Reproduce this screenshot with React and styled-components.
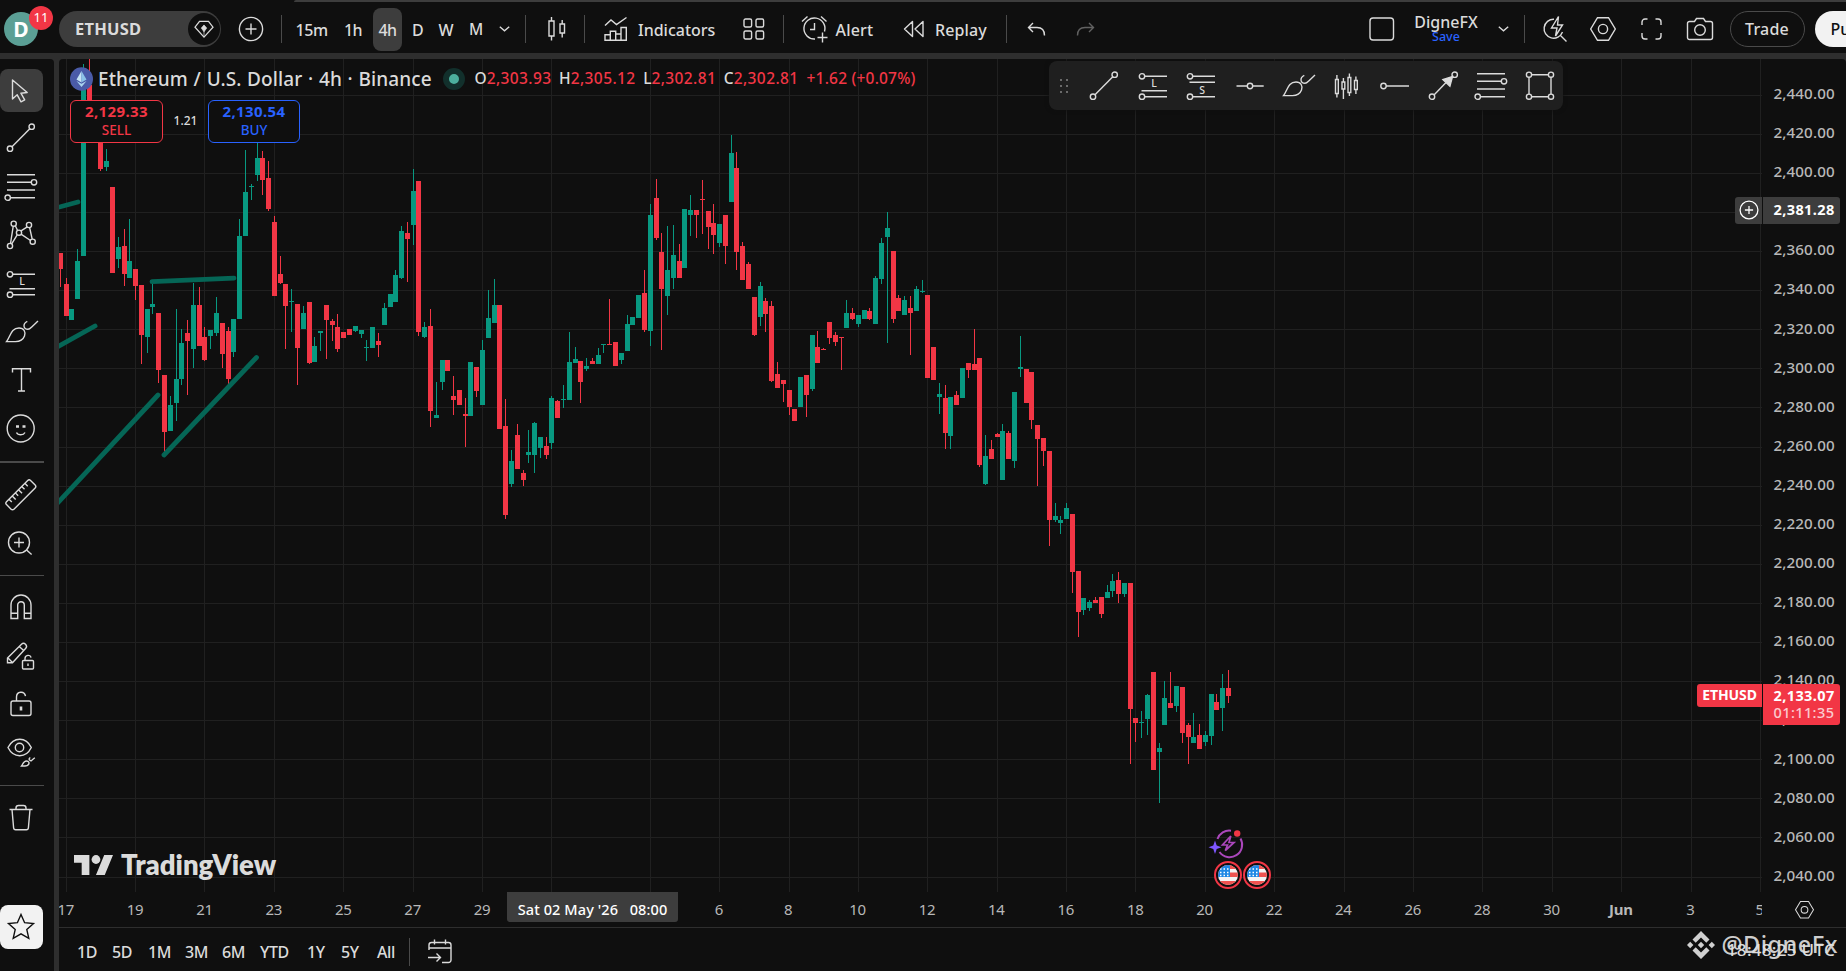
import React from 'react';
import styled, { createGlobalStyle, css } from 'styled-components';

const UP = '#089981';
const DOWN = '#f23645';
const BLUE = '#2962ff';
const TEXT = '#dbdbdb';
const BG = '#0f0f0f';
const GAP = '#2e2e2e';
const HOVER = '#3d3d3d';

const GlobalStyle = createGlobalStyle`
    body {
        margin: 0;
        background: ${GAP};
        color: ${TEXT};
        font-family: 'Noto Sans', 'Open Sans', sans-serif;
        font-size: 16px;
        overflow: hidden;
    }

    * {
        box-sizing: border-box;
    }
`;

// x, high, body top, body bottom, low, 1 = bullish
const candles = [
    [60, 253, 253, 269, 287, 0], [66, 278, 284, 316, 316, 0], [71, 309, 309, 320, 320, 1], [77, 249, 261, 299, 299, 1],
    [83, 64, 75, 256, 256, 1], [89, 59, 85, 110, 110, 0], [95, 100, 105, 120, 125, 1], [100, 125, 125, 169, 171, 0],
    [106, 149, 161, 167, 171, 1], [112, 187, 187, 273, 273, 0], [118, 237, 247, 259, 268, 1], [124, 229, 246, 274, 286, 0],
    [129, 219, 261, 278, 278, 1], [135, 269, 269, 286, 300, 0], [141, 285, 285, 335, 364, 0], [147, 309, 309, 337, 353, 1],
    [152, 282, 304, 307, 314, 1], [158, 313, 313, 370, 383, 0], [164, 375, 375, 432, 452, 0], [170, 396, 405, 431, 431, 1],
    [176, 309, 379, 403, 421, 1], [181, 329, 343, 379, 385, 1], [187, 320, 333, 341, 395, 0], [193, 283, 305, 349, 368, 1],
    [199, 287, 305, 346, 346, 0], [204, 327, 337, 360, 361, 0], [210, 330, 330, 336, 349, 1], [216, 297, 313, 333, 336, 1],
    [222, 323, 323, 354, 368, 0], [228, 327, 331, 379, 386, 0], [233, 319, 319, 352, 357, 1], [239, 219, 236, 319, 319, 1],
    [245, 150, 192, 236, 236, 1], [251, 184, 186, 187, 200, 1], [257, 130, 158, 175, 181, 1], [262, 151, 158, 180, 195, 0],
    [268, 161, 178, 209, 211, 0], [274, 216, 222, 296, 296, 0], [280, 256, 274, 283, 284, 0], [285, 284, 284, 306, 349, 0],
    [291, 289, 301, 302, 332, 1], [297, 304, 304, 348, 385, 0], [303, 306, 313, 329, 329, 1], [309, 302, 302, 363, 364, 0],
    [314, 337, 346, 362, 362, 1], [320, 331, 331, 333, 351, 1], [326, 305, 305, 320, 359, 0], [332, 319, 321, 325, 341, 0],
    [337, 314, 327, 349, 352, 0], [343, 332, 332, 338, 338, 0], [349, 329, 329, 335, 335, 0], [355, 326, 326, 331, 332, 1],
    [361, 330, 330, 334, 338, 1], [366, 340, 347, 348, 361, 1], [372, 327, 327, 348, 348, 1], [378, 333, 341, 345, 357, 0],
    [384, 303, 308, 325, 325, 1], [390, 294, 294, 307, 307, 1], [395, 270, 275, 302, 302, 1], [401, 226, 231, 278, 279, 1],
    [407, 222, 233, 239, 282, 0], [413, 169, 191, 225, 245, 1], [418, 181, 181, 332, 336, 0], [424, 322, 327, 337, 338, 1],
    [430, 309, 326, 411, 427, 0], [436, 382, 415, 418, 418, 1], [442, 360, 360, 382, 390, 1], [447, 360, 360, 371, 371, 0],
    [453, 376, 396, 400, 415, 0], [459, 390, 390, 405, 405, 0], [465, 398, 414, 416, 447, 0], [470, 362, 362, 416, 416, 1],
    [476, 367, 367, 391, 397, 0], [482, 340, 350, 405, 405, 1], [488, 290, 318, 338, 338, 1], [494, 279, 305, 323, 323, 1],
    [499, 305, 305, 429, 429, 0], [505, 399, 426, 515, 519, 0], [511, 450, 461, 484, 487, 1], [517, 424, 435, 469, 469, 0],
    [523, 470, 473, 480, 486, 0], [528, 430, 452, 455, 463, 1], [534, 422, 423, 455, 473, 1], [540, 437, 437, 448, 458, 1],
    [546, 437, 446, 455, 459, 0], [551, 396, 398, 443, 449, 1], [557, 400, 401, 418, 418, 0], [563, 385, 399, 400, 408, 1],
    [569, 332, 362, 400, 400, 1], [575, 347, 359, 363, 363, 1], [580, 361, 361, 382, 403, 0], [586, 358, 366, 369, 371, 1],
    [592, 358, 361, 364, 364, 0], [598, 348, 355, 364, 364, 1], [603, 344, 344, 345, 353, 1], [609, 299, 344, 345, 345, 0],
    [615, 342, 342, 366, 366, 0], [621, 353, 353, 360, 364, 1], [627, 315, 324, 351, 351, 1], [632, 317, 317, 325, 325, 1],
    [638, 295, 295, 318, 318, 1], [644, 270, 293, 330, 332, 0], [650, 204, 215, 331, 346, 1], [656, 179, 198, 238, 240, 0],
    [661, 233, 252, 289, 350, 0], [667, 226, 270, 296, 315, 1], [673, 225, 255, 278, 289, 1], [679, 244, 261, 278, 278, 0],
    [684, 209, 209, 268, 268, 1], [690, 195, 210, 215, 236, 1], [696, 210, 210, 215, 238, 0], [702, 180, 199, 200, 234, 0],
    [708, 211, 211, 227, 249, 0], [713, 204, 223, 235, 254, 0], [719, 224, 224, 243, 247, 1], [725, 215, 215, 246, 264, 0],
    [731, 135, 153, 202, 202, 1], [736, 152, 168, 252, 270, 0], [742, 242, 246, 280, 280, 0], [748, 262, 264, 289, 289, 0],
    [754, 297, 297, 335, 336, 0], [760, 282, 286, 317, 326, 1], [765, 298, 301, 314, 332, 0], [771, 301, 306, 381, 382, 0],
    [777, 362, 374, 388, 388, 0], [783, 380, 380, 384, 402, 0], [789, 390, 390, 407, 415, 0], [794, 409, 409, 421, 421, 0],
    [800, 377, 377, 407, 407, 1], [806, 375, 375, 395, 417, 0], [812, 335, 335, 389, 391, 1], [817, 331, 347, 363, 363, 0],
    [823, 348, 349, 350, 350, 0], [829, 322, 322, 338, 344, 0], [835, 332, 335, 342, 346, 0], [841, 337, 337, 338, 370, 0],
    [846, 300, 313, 328, 328, 1], [852, 308, 313, 319, 320, 0], [858, 315, 315, 324, 327, 1], [864, 310, 310, 319, 319, 1],
    [869, 308, 311, 319, 320, 0], [875, 276, 278, 324, 324, 1], [881, 238, 243, 279, 284, 1], [887, 212, 228, 237, 343, 1],
    [893, 251, 251, 319, 323, 0], [898, 295, 298, 311, 311, 0], [904, 296, 300, 315, 315, 1], [910, 296, 308, 313, 355, 0],
    [916, 286, 289, 311, 311, 1], [922, 280, 291, 292, 293, 1], [927, 295, 295, 378, 378, 0], [933, 347, 347, 380, 380, 0],
    [939, 383, 394, 397, 414, 1], [945, 385, 398, 433, 449, 0], [950, 397, 397, 436, 449, 1], [956, 391, 395, 405, 405, 0],
    [962, 368, 368, 398, 398, 1], [968, 363, 363, 370, 378, 0], [974, 329, 364, 370, 370, 0], [979, 358, 358, 465, 467, 0],
    [985, 435, 456, 484, 485, 1], [991, 440, 449, 459, 459, 0], [997, 433, 434, 437, 437, 0], [1002, 424, 431, 480, 480, 1],
    [1008, 431, 433, 459, 459, 0], [1014, 392, 392, 461, 468, 1], [1020, 336, 367, 369, 377, 1], [1026, 369, 369, 403, 403, 0],
    [1031, 372, 372, 420, 429, 0], [1037, 425, 425, 439, 486, 0], [1043, 438, 438, 451, 466, 0], [1049, 451, 451, 520, 546, 0],
    [1055, 503, 516, 520, 522, 1], [1060, 516, 520, 523, 534, 1], [1066, 503, 508, 519, 519, 1], [1072, 514, 514, 572, 593, 0],
    [1078, 571, 571, 612, 637, 0], [1083, 598, 598, 610, 615, 1], [1089, 600, 602, 608, 611, 1], [1095, 597, 600, 603, 603, 0],
    [1101, 597, 597, 614, 618, 0], [1107, 585, 592, 598, 598, 1], [1112, 574, 581, 591, 597, 1], [1118, 572, 580, 594, 603, 0],
    [1124, 583, 583, 594, 597, 1], [1130, 583, 583, 709, 764, 0], [1135, 718, 718, 723, 742, 0], [1141, 711, 722, 723, 738, 1],
    [1147, 694, 695, 719, 735, 1], [1153, 672, 672, 770, 770, 0], [1159, 743, 748, 752, 803, 1], [1164, 681, 698, 725, 725, 1],
    [1170, 672, 703, 708, 708, 0], [1176, 686, 686, 706, 712, 1], [1182, 687, 687, 733, 743, 0], [1188, 723, 725, 737, 764, 0],
    [1193, 713, 737, 743, 743, 1], [1199, 724, 735, 749, 749, 0], [1205, 731, 735, 742, 746, 1], [1211, 694, 694, 736, 745, 1],
    [1216, 694, 702, 710, 710, 0], [1222, 674, 688, 708, 731, 1], [1228, 670, 688, 696, 703, 0],
];

const gridX = [66, 135, 204, 274, 343, 413, 482, 551, 650, 719, 789, 858, 927, 997, 1066, 1135, 1205, 1274, 1344, 1413, 1482, 1552, 1621, 1691, 1760];
const gridY = [95, 134, 173, 212, 251, 290, 329, 368, 407, 447, 486, 525, 564, 603, 642, 681, 720, 759, 798, 837, 877];

const trendLines = [
    [52, 209, 78, 202],
    [52, 350, 95, 326],
    [52, 509, 158, 395],
    [152, 281.6, 234, 278.2],
    [164, 455, 256.5, 357.5],
];

const prices = Array.from({ length: 21 }, (_, i) => `2,${440 - i * 20}`.replace(/,(\d{2})$/, ',0$1') + '.00');
const daysBefore = ['17', '19', '21', '23', '25', '27', '29'];
const daysAfter = ['6', '8', '10', '12', '14', '16', '18', '20', '22', '24', '26', '28', '30', 'Jun', '3', '5'];

const Page = styled.div`
    width: 1846px;
    height: 971px;
    display: flex;
    flex-direction: column;
    gap: 6px;
    overflow: hidden;
    background: ${GAP};
`;

const Toolbar = styled.header`
    position: relative;
    flex: none;
    height: 53px;
    padding-top: 5px;
    display: flex;
    align-items: center;
    background: ${BG};

    > span {
        padding-top: 1.5px;
    }

    &::before {
        content: '';
        position: absolute;
        top: 0;
        left: 294px;
        right: 0;
        height: 2px;
        border-top-left-radius: 3px;
        background: ${HOVER};
    }
`;

const Body = styled.div`
    flex: 1;
    display: flex;
    gap: 5px;
    min-height: 0;
`;

const Rail = styled.nav`
    width: 54px;
    padding-top: 6.5px;
    display: flex;
    flex-direction: column;
    background: ${BG};
    border-top-right-radius: 4px;
`;

const RailItem = styled.div`
    position: relative;
    flex: none;
    width: 43px;
    height: 48.4px;
    display: flex;
    align-items: center;
    padding-left: 3px;

    ${({ $active }) => $active && css`
        height: 43px;
        margin: 3px 0 2.7px;
        border-radius: 8px;
        background: ${HOVER};
    `}
`;

const RailLine = styled.hr`
    flex: none;
    width: 44px;
    height: ${({ $h }) => $h || 1}px;
    margin: ${({ $m }) => $m};
    border: 0;
    background: #4a4a4a;
`;

const StarButton = styled.div`
    width: 43px;
    height: 44px;
    margin-top: 63px;
    padding: 4px 3px;
    border-radius: 8px;
    background: #f2f2f2;
    color: #0f0f0f;
`;

const Icon = styled.svg`
    display: block;
    flex: none;
    width: ${({ $w }) => $w || 36}px;
    height: ${({ $h }) => $h || 36}px;
    margin-left: ${({ $ml }) => $ml || 0}px;
    overflow: visible;
    fill: none;
    stroke: currentColor;
    stroke-width: 1.4;
    opacity: ${({ $dim }) => ($dim ? 0.4 : 1)};

    text {
        stroke: none;
        fill: currentColor;
        font-size: 10.5px;
        font-weight: 500;
    }
`;

const Label = styled.span`
    flex: none;
    width: ${({ $w }) => $w}px;
    margin-left: ${({ $ml }) => $ml || 0}px;
    letter-spacing: ${({ $ls }) => $ls || 0}px;
    font-weight: ${({ $bold }) => ($bold ? 700 : 500)};
    font-size: ${({ $size }) => $size || 16}px;
    line-height: 1;
    white-space: pre;
    color: ${({ $color }) => $color || 'inherit'};
`;

const Divider = styled.div`
    flex: none;
    width: 1px;
    height: 28px;
    margin-left: ${({ $ml }) => $ml}px;
    background: #4a4a4a;
`;

const Avatar = styled.div`
    position: relative;
    flex: none;
    width: 34px;
    height: 34px;
    margin-left: 4px;
    border-radius: 50%;
    background: #5b9f95;
    color: #fff;
    font-size: 21px;
    font-weight: 700;
    line-height: 34px;
    text-align: center;
`;

const Badge = styled.span`
    position: absolute;
    top: -6px;
    left: 25px;
    width: 24px;
    height: 24px;
    border-radius: 50%;
    background: ${DOWN};
    font-size: 13px;
    font-weight: 400;
    line-height: 22px;
`;

const SymbolPill = styled.div`
    flex: none;
    width: 162px;
    height: 36px;
    margin-left: 21px;
    padding: 0 1px 0 16px;
    display: flex;
    align-items: center;
    justify-content: space-between;
    border-radius: 18px;
    background: ${HOVER};
`;

const PillRound = styled.div`
    width: 32px;
    height: 32px;
    display: flex;
    align-items: center;
    justify-content: center;
    border-radius: 50%;
    background: ${BG};
`;

const ActiveInterval = styled.div`
    flex: none;
    width: 29px;
    height: 43px;
    margin-left: 11px;
    padding-top: 1px;
    display: flex;
    align-items: center;
    justify-content: center;
    border-radius: 8px;
    background: ${HOVER};
`;

const LayoutName = styled.div`
    flex: none;
    width: 64px;
    margin-left: 19px;
    display: flex;
    flex-direction: column;
    align-items: center;
    gap: 1px;
`;

const TradeButton = styled.div`
    flex: none;
    width: 75px;
    height: 36px;
    margin-left: 16px;
    display: flex;
    align-items: center;
    justify-content: center;
    border: 1px solid #4a4a4a;
    border-radius: 18px;
`;

const PublishButton = styled.div`
    flex: none;
    width: 96px;
    height: 36px;
    margin-left: 10px;
    padding-left: 16px;
    display: flex;
    align-items: center;
    border-radius: 18px;
    background: #f2f2f2;
    color: #0f0f0f;
`;

const Workspace = styled.main`
    position: relative;
    flex: 1;
    display: flex;
    flex-direction: column;
    background: ${BG};
    border-radius: 4px 4px 0 0;
    overflow: hidden;
`;

const ChartRow = styled.div`
    display: flex;
    height: 833px;
`;

const Pane = styled.section`
    position: relative;
    width: 1703px;
    height: 833px;
`;

const Plot = styled.svg`
    display: block;
    width: 1703px;
    height: 833px;
`;

const PriceAxis = styled.aside`
    position: relative;
    flex: 1;
    padding-top: 15px;
    color: #b8b8b8;
`;

const PriceLabel = styled.div`
    height: 39.1px;
    display: flex;
    align-items: center;
    padding-left: 11.5px;
`;

const TimeAxis = styled.div`
    position: relative;
    height: 35px;
    display: flex;
    color: #b8b8b8;
`;

const TimeScale = styled.div`
    width: 1703px;
    display: flex;
    overflow: hidden;
`;

const Day = styled.div`
    flex: none;
    width: 69.4px;
    line-height: 35px;
    font-size: 15px;
    text-align: center;
    letter-spacing: -0.3px;
    font-weight: ${({ $bold }) => ($bold ? 700 : 400)};

    &:first-child {
        margin-left: -28px;
    }
`;

const DayBreak = styled.div`
    flex: none;
    width: 167.4px;
`;

const AxisSettings = styled.div`
    padding: 9px 0 0 33px;
    color: ${TEXT};
`;

const HoverTime = styled.div`
    position: absolute;
    left: 448px;
    top: 0;
    width: 171px;
    height: 30px;
    display: flex;
    align-items: center;
    justify-content: center;
    border-radius: 0 0 3px 3px;
    padding-top: 4px;
    background: ${HOVER};
    color: #fff;
`;

const BottomBar = styled.footer`
    flex: 1;
    display: flex;
    align-items: center;
    padding: 5px 0 0 18px;
    border-top: 1px solid ${GAP};
`;

const Legend = styled.div`
    position: absolute;
    left: 11px;
    top: 8px;
    height: 24px;
    display: flex;
    align-items: center;
`;

const LegendTitle = styled.span`
    flex: none;
    width: 333px;
    margin-left: 5px;
    font-size: 19px;
    font-weight: 500;
    line-height: 1;
    letter-spacing: 0.1px;
    word-spacing: 0.6px;
    white-space: nowrap;
`;

const StatusDot = styled.span`
    flex: none;
    width: 22px;
    height: 22px;
    margin-left: 12px;
    border: 6px solid #12302c;
    border-radius: 50%;
    background: #4caf9d;
`;

const OrderPanel = styled.div`
    position: absolute;
    left: 11px;
    top: 41px;
    display: flex;
    align-items: center;
`;

const OrderButton = styled.div`
    width: ${({ $w }) => $w}px;
    height: 43px;
    display: flex;
    flex-direction: column;
    align-items: center;
    padding-top: 3px;
    gap: 4.5px;
    border: 1px solid;
    border-radius: 6px;
    background: ${BG};
    color: ${({ $color }) => $color};
`;

const Spread = styled.div`
    width: 45px;
    padding-bottom: 2px;
    font-size: 12px;
    font-weight: 500;
    text-align: center;
`;

const DrawingBar = styled.div`
    position: absolute;
    left: 990px;
    top: 2px;
    width: 514px;
    height: 49px;
    padding-left: 10px;
    display: flex;
    align-items: center;
    border-radius: 8px;
    background: #1f1f1f;
    box-shadow: 0 0 4px ${BG};
`;

const Brand = styled.div`
    position: absolute;
    left: 15px;
    top: 789px;
    display: flex;
    align-items: center;
    gap: 8px;
    font-family: Lato, sans-serif;
    font-size: 27.5px;
    font-weight: 800;
    line-height: 34px;
`;

const Tag = styled.div`
    position: absolute;
    left: ${({ $x }) => $x}px;
    top: ${({ $y }) => $y}px;
    width: ${({ $w }) => $w}px;
    height: ${({ $h }) => $h}px;
    display: flex;
    flex-direction: column;
    align-items: ${({ $pad }) => ($pad ? 'flex-start' : 'center')};
    justify-content: center;
    gap: 3px;
    padding-left: ${({ $pad }) => $pad || 0}px;
    padding-bottom: 2px;
    border-radius: ${({ $side }) => ($side === 'left' ? '3px 0 0 3px' : '0 3px 3px 0')};
    background: ${({ $bg }) => $bg};
    color: #fff;
`;

const Events = styled.div`
    position: absolute;
    left: 1150px;
    top: 768px;
`;

const Clock = styled.div`
    position: absolute;
    right: 11px;
    bottom: 10px;
`;

const Watermark = styled.div`
    position: absolute;
    right: 8px;
    bottom: 12px;
    display: flex;
    align-items: center;
    gap: 6px;
    color: rgba(225, 225, 225, 0.92);
`;

const HexIcon = ({ size, ...rest }) => (
    <Icon viewBox="0 0 26 24" $w={size} $h={(size * 24) / 26} {...rest}>
        <path d="M7.5.7h11L25.3 12l-6.8 11.3h-11L.7 12z" />
        <circle cx="13" cy="12" r="4.6" />
    </Icon>
);

const LineTool = (props) => (
    <Icon viewBox="0 0 36 36" {...props}>
        <path d="M9 26.7 26.8 8.7" />
        <circle cx="7" cy="28.7" r="2.7" />
        <circle cx="28.7" cy="6.7" r="2.7" />
    </Icon>
);

const FibTool = (props) => (
    <Icon viewBox="0 0 36 36" {...props}>
        <path d="M4 5.7h28M4 13.3h24.5M4 21h28M7.5 28.7H32" />
        <circle cx="31" cy="13.3" r="2.7" />
        <circle cx="4.7" cy="28.7" r="2.7" />
    </Icon>
);

const PositionTool = ({ letter, ...rest }) => (
    <Icon viewBox="0 0 36 36" {...rest}>
        {letter === 'L'
            ? <path d="M9.7 8.3H32M6.5 22.7H32M9.7 28.7H32" />
            : <path d="M9.7 8.3H32M6.5 14.3H32M9.7 28.7H32" />}
        <circle cx="7" cy="8.3" r="2.7" />
        <circle cx="7" cy="28.7" r="2.7" />
        <text x="16.2" y={letter === 'L' ? 19.2 : 25.6}>{letter}</text>
    </Icon>
);

const BrushTool = (props) => (
    <Icon viewBox="0 0 36 36" {...props}>
        <path d="M3.5 27.6C7.5 22.5 8 14 16 14c5 0 7 4 5.5 8-1.5 4-5 5.6-9 5.6z" />
        <path d="M24.3 7.3c-5 2.5-4 8 .7 8 1.8 0 2.7-1.3 4-2.6l6-5.7" />
    </Icon>
);

const TopToolbar = () => (
    <Toolbar>
        <Avatar>D<Badge>11</Badge></Avatar>
        <SymbolPill>
            <Label $bold $w={68} $size={16.5} $ls={0.2}>ETHUSD</Label>
            <PillRound>
                <Icon viewBox="0 0 22 20" $w={20} $h={18}>
                    <path d="M6 1.5h10l5 6.5-10 11L1 8z" />
                    <path d="M11 5.5 14 9l-3 4-3-4zM11 12v6" fill="currentColor" strokeWidth=".8" />
                </Icon>
            </PillRound>
        </SymbolPill>
        <Icon viewBox="0 0 26 26" $w={26} $h={26} $ml={17}>
            <circle cx="13" cy="13" r="11.6" />
            <path d="M13 7.5v11M7.5 13h11" />
        </Icon>
        <Divider $ml={17} />
        <Label $w={33} $ml={13.5} $ls={-0.4}>15m</Label>
        <Label $w={18} $ml={15.5} $ls={-0.6}>1h</Label>
        <ActiveInterval><Label $ls={-0.6}>4h</Label></ActiveInterval>
        <Label $w={11} $ml={10}>D</Label>
        <Label $w={16} $ml={15.5}>W</Label>
        <Label $w={14} $ml={14.5} $size={15.5}>M</Label>
        <Icon viewBox="0 0 11 6" $w={11} $h={6} $ml={15.5}><path d="m.8.8 4.7 4 4.7-4" /></Icon>
        <Divider $ml={15} />
        <Icon viewBox="0 0 18 26" $w={18} $h={26} $ml={22}>
            <path d="M1 5h5v15H1zM3.5 1v4M3.5 20v4.5M12 8h4.5v9H12zM14.2 4v4M14.2 17v4.5" />
        </Icon>
        <Divider $ml={18} />
        <Icon viewBox="0 0 24 26" $w={24} $h={26} $ml={19}>
            <path d="m1 9.5 6-5.5 5.5 4.5 10-7M1 24.2v-5.5h5.3v5.5zM6.3 24.2v-9h5.4v9zM11.7 24.2V18H17v6.2zM17 24.2V11.5h5.3v12.7z" />
        </Icon>
        <Label $w={78} $ml={10.5}>Indicators</Label>
        <Icon viewBox="0 0 22 22" $w={22} $h={22} $ml={26.5}>
            <rect x="1" y="1" width="7.6" height="8" rx="1.5" />
            <rect x="13" y="1" width="7.6" height="8" rx="1.5" />
            <rect x="1" y="13" width="7.6" height="8" rx="1.5" />
            <rect x="13" y="13" width="7.6" height="8" rx="1.5" />
        </Icon>
        <Divider $ml={18} />
        <Icon viewBox="0 0 28 28" $w={28} $h={28} $ml={17}>
            <path d="M23.5 16.5A10.5 10.5 0 1 0 14 24M13.500 8v6.5H9M1 6.500 6.500 1.500M20 1.500l5.500 5M21.500 17.500v10M16.500 22.500h10" />
        </Icon>
        <Label $w={42} $ml={7} $ls={0.2}>Alert</Label>
        <Icon viewBox="0 0 22 18" $w={22} $h={18} $ml={25}>
            <path d="M9.5 1.5v15L1.5 9zM20 1.5v15L12 9z" strokeLinejoin="round" />
        </Icon>
        <Label $w={55} $ml={10.5} $ls={0.1}>Replay</Label>
        <Divider $ml={16} />
        <Icon viewBox="0 0 19 14" $w={19} $h={14} $ml={20}>
            <path d="M6 1 1.5 5.5 6 10M1.5 5.5H10c5 0 7.5 3 7.5 8" />
        </Icon>
        <Icon viewBox="0 0 19 14" $w={19} $h={14} $ml={30} $dim>
            <path d="m13 1 4.5 4.5L13 10M17.5 5.5H9c-5 0-7.5 3-7.5 8" />
        </Icon>

        <Icon viewBox="0 0 26 24" $w={26} $h={24} $ml={274}><rect x="1" y="1" width="23.5" height="22" rx="3" /></Icon>
        <LayoutName>
            <Label $ls={0}>DigneFX</Label>
            <Label $size={12.5} $color={BLUE}>Save</Label>
        </LayoutName>
        <Icon viewBox="0 0 11 6" $w={11} $h={6} $ml={19.5}><path d="m.8.8 4.7 4 4.7-4" /></Icon>
        <Divider $ml={15.5} />
        <Icon viewBox="0 0 24 28" $w={24} $h={28} $ml={18}>
            <path d="M11 4.2A9.5 9.5 0 1 0 19.5 17M17 20l6.5 6.5M15.5 1.5 8.5 13H14l-1.5 8 7-11H14.5z" />
        </Icon>
        <HexIcon size={26} $ml={23} />
        <Icon viewBox="0 0 21 22" $w={21} $h={22} $ml={25}>
            <path d="M1 7V4a3 3 0 0 1 3-3h2.5M14.5 1H17a3 3 0 0 1 3 3v3M20 15v3a3 3 0 0 1-3 3h-2.5M6.5 21H4a3 3 0 0 1-3-3v-3" />
        </Icon>
        <Icon viewBox="0 0 28 24" $w={28} $h={24} $ml={23.5}>
            <path d="M3.5 4.5h5l2-3h7l2 3h5a2 2 0 0 1 2 2v14a2 2 0 0 1-2 2h-21a2 2 0 0 1-2-2v-14a2 2 0 0 1 2-2z" />
            <circle cx="14" cy="13" r="5.3" />
        </Icon>
        <TradeButton><Label $ls={0.2}>Trade</Label></TradeButton>
        <PublishButton><Label>Publish</Label></PublishButton>
    </Toolbar>
);

const SideRail = () => (
    <Rail>
        <RailItem $active>
            <Icon viewBox="0 0 36 36">
                <path d="M9.5 8v19l4.7-4.2 3.8 7 3.7-2-3.8-6.6 6.3-.7z" strokeLinejoin="round" />
            </Icon>
        </RailItem>
        <RailItem><LineTool /></RailItem>
        <RailItem><FibTool /></RailItem>
        <RailItem>
            <Icon viewBox="0 0 36 36">
                <path d="M10.2 9.3 7.5 26.5M12.300 8.700l2.400 5M18 13.800l6.300-4M26.600 10.500l2.600 11.600M18 17.200l9.500 6.300M14.200 17.800l-5.500 9" />
                <circle cx="10.7" cy="6.7" r="2.6" />
                <circle cx="26" cy="8" r="2.6" />
                <circle cx="16" cy="15.7" r="2.6" />
                <circle cx="29.7" cy="24.7" r="2.6" />
                <circle cx="7" cy="29" r="2.6" />
            </Icon>
        </RailItem>
        <RailItem><PositionTool letter="L" /></RailItem>
        <RailItem><BrushTool /></RailItem>
        <RailItem>
            <Icon viewBox="0 0 36 36"><path d="M9.5 10.5V6.700h18v3.800M18.500 6.700V29M15 29h7" /></Icon>
        </RailItem>
        <RailItem>
            <Icon viewBox="0 0 36 36">
                <circle cx="17.7" cy="17.5" r="13.5" />
                <path d="M13.5 21.500c1.500 3 7 3 8.500 0" />
                <path d="M13 15.500h3M19.500 15.500h3" strokeWidth="2.6" />
            </Icon>
        </RailItem>
        <RailLine $h={2} $m="8px 0 8px" />
        <RailItem>
            <Icon viewBox="0 0 36 36">
                <g transform="rotate(-45 18 18)">
                    <rect x="1" y="12.500" width="34" height="10.500" rx="2" />
                    <path d="M6.500 12.500v4M11 12.500v5M15.500 12.500v4M20 12.500v5M24.500 12.500v4M29 12.500v4" />
                </g>
            </Icon>
        </RailItem>
        <RailItem>
            <Icon viewBox="0 0 36 36">
                <circle cx="16" cy="16.5" r="10.5" />
                <path d="M16 11.500v10M11 16.500h10M23.600 24l5 4.500" />
            </Icon>
        </RailItem>
        <RailLine $m="7px 0 7.5px" />
        <RailItem>
            <Icon viewBox="0 0 36 36">
                <path d="M8 29.500V16a10 10 0 0 1 20 0v13.500h-6.700V16a3.300 3.300 0 0 0-6.600 0v13.500zM8 24.300h6.700M21.300 24.300H28" />
            </Icon>
        </RailItem>
        <RailItem>
            <Icon viewBox="0 0 36 36">
                <path d="M4.500 20 18.500 6.300c1.500-1.500 3-1 4 0s1.500 2.600.3 3.900L9.500 24.800h-5zM16.200 8.500l4.500 4M5 20l4.500 4.500" />
                <rect x="19.500" y="22.500" width="11" height="8.500" rx="1" />
                <path d="M22 22.500v-2c0-3.500 5.500-4.500 6-.8M25 25.500v2.500" />
            </Icon>
        </RailItem>
        <RailItem>
            <Icon viewBox="0 0 36 36">
                <rect x="8" y="15" width="20" height="14.500" rx="2" />
                <path d="M13.500 15v-4c0-6 8-6.500 9-.8" />
                <path d="M18 20.500v4" strokeWidth="2.600" />
            </Icon>
        </RailItem>
        <RailItem>
            <Icon viewBox="0 0 36 36">
                <path d="M5 12.500c5.500-11 18-11 23.300 0-5.300 11-17.800 11-23.300 0z" />
                <circle cx="16.500" cy="12.500" r="4.200" />
                <path d="M18.500 31c1.500-2 2-5 5-5 2.500 0 3 2 2 3.500-.8 1.200-2 1.500-3.500 1.500zM27.300 22.500c-2.500 1.500-.3 4 1.500 2.800l3-2.500" />
            </Icon>
        </RailItem>
        <RailLine $m="8px 0 8px" />
        <RailItem>
            <Icon viewBox="0 0 36 36">
                <path d="M6.500 9.500h23M13 9.500V8a2.500 2.500 0 0 1 2.500-2.500h5A2.500 2.500 0 0 1 23 8v1.500M9 9.500l1.600 18.300a2 2 0 0 0 2 1.900h10.800a2 2 0 0 0 2-1.900L27 9.500" />
            </Icon>
        </RailItem>
        <StarButton>
            <Icon viewBox="0 0 36 36">
                <path d="m18 5.500 3.600 8.200 8.900.9-6.700 6 2 8.700L18 24.800l-7.800 4.500 2-8.700-6.700-6 8.900-.9z" />
            </Icon>
        </StarButton>
    </Rail>
);

const Candles = () => (
    <Plot viewBox="59 59 1703 833" shapeRendering="crispEdges">
        <g fill="#202020">
            {gridX.map((x) => <rect key={x} x={x} y="59" width="1" height="833" />)}
            {gridY.map((y) => <rect key={y} x="59" y={y} width="1703" height="1" />)}
        </g>
        {candles.map(([x, high, top, bottom, low, up]) => (
            <g key={x} fill={up ? UP : DOWN}>
                <rect x={x} y={high} width="1" height={low - high} />
                <rect x={x - 2} y={top} width="5" height={bottom - top} />
            </g>
        ))}
        <g stroke="#056656" strokeWidth="4.8" strokeLinecap="round" shapeRendering="auto">
            {trendLines.map(([x1, y1, x2, y2]) => <line key={y1} x1={x1} y1={y1} x2={x2} y2={y2} />)}
        </g>
    </Plot>
);

const ohlc = [
    ['O', '2,303.93'],
    ['H', '2,305.12'],
    ['L', '2,302.81'],
    ['C', '2,302.81'],
];

const ChartLegend = () => (
    <Legend>
        <svg width="23" height="24" viewBox="0 0 23 24">
            <ellipse cx="11.5" cy="12" rx="11.5" ry="11.8" fill="#4a5ba8" />
            <path d="M11.5 4 6.5 12.5l5 3z" fill="#c5e3f5" />
            <path d="m11.5 4 5 8.5-5 3z" fill="#8cc3e8" />
            <path d="m6.5 14 5 6 5-6-5 2.8z" fill="#a9d4ee" />
        </svg>
        <LegendTitle>Ethereum / U.S. Dollar · 4h · Binance</LegendTitle>
        <StatusDot />
        {ohlc.map(([name, value], i) => (
            <React.Fragment key={name}>
                <Label $ml={i ? 7.6 : 9.5} $size={15.5}>{name}</Label>
                <Label $size={15.5} $ls={0.4} $color={DOWN}>{value}</Label>
            </React.Fragment>
        ))}
        <Label $ml={8} $size={15.5} $ls={0.2} $color={DOWN}>+1.62 (+0.07%)</Label>
    </Legend>
);

const Drawings = () => (
    <DrawingBar>
        <Icon viewBox="0 0 10 16" $w={10} $h={16} $dim>
            <path d="M1 2h2M7 2h2M1 8h2M7 8h2M1 14h2M7 14h2" strokeWidth="2" />
        </Icon>
        <LineTool $ml={17} />
        <PositionTool letter="L" $ml={12.5} />
        <PositionTool letter="S" $ml={12.5} />
        <Icon viewBox="0 0 36 36" $ml={12.5}>
            <path d="M4.500 18h10.800M20.700 18h11" />
            <circle cx="18" cy="18" r="2.700" />
        </Icon>
        <BrushTool $ml={12.5} />
        <Icon viewBox="0 0 36 36" $ml={12.5}>
            <path d="M6.500 11.500h2.800v14H6.500zM7.900 7v4.500M7.900 25.500v4M13 14h2.800v7H13zM14.400 10v4M14.400 21v10M19 9.500h2.800v15H19zM20.400 5.500v4M20.400 24.500v3.500M25.500 12.500h2.800v9h-2.800zM26.900 8.500v4M26.900 21.500v4.500" />
        </Icon>
        <Icon viewBox="0 0 36 36" $ml={12.5}>
            <path d="M9 18h23" />
            <circle cx="6.500" cy="18" r="2.700" />
        </Icon>
        <Icon viewBox="0 0 36 36" $ml={12.5}>
            <path d="m8 27 12-12.500" />
            <path d="m26.500 8.500-2.600 9.700-7-6.600z" fill="currentColor" />
            <circle cx="6" cy="28.700" r="2.700" />
            <circle cx="28.700" cy="6.700" r="2.700" />
        </Icon>
        <FibTool $ml={11.5} />
        <Icon viewBox="0 0 36 36" $ml={12.5}>
            <path d="M9.700 6.700h16.600M9.700 28.700h16.600M7 9.500V26M29 9.500V26" />
            <circle cx="7" cy="6.700" r="2.600" />
            <circle cx="29" cy="6.700" r="2.600" />
            <circle cx="7" cy="28.700" r="2.600" />
            <circle cx="29" cy="28.700" r="2.600" />
        </Icon>
    </DrawingBar>
);

const Flag = ({ cx }) => (
    <g transform={`translate(${cx} 48)`}>
        <circle r="13" fill={BG} stroke={DOWN} strokeWidth="2" />
        <g clipPath="url(#flag)">
            <rect x="-10" y="-10" width="20" height="20" fill="#f4f4f4" />
            <rect x="-10" y="-10" width="20" height="4" fill="#ef5350" />
            <rect x="-10" y="-2.5" width="20" height="4.5" fill="#ef5350" />
            <rect x="-10" y="6" width="20" height="4.5" fill="#ef5350" />
            <rect x="-10" y="-10" width="12" height="12" fill="#1e88e5" />
            <path d="M-8-6h9M-8-2.500h9M-8 .5h9" stroke="#fff" strokeWidth="1.5" strokeDasharray="1.5 2" />
        </g>
    </g>
);

const EventMarks = () => (
    <Events>
        <svg width="64" height="64" viewBox="0 0 64 64" fill="none" overflow="visible">
            <defs><clipPath id="flag"><circle r="10" /></clipPath></defs>
            <g transform="translate(0 -1)">
                <path d="M8.500 13A12.300 12.300 0 0 1 22 4.700M31.500 12.500A12.500 12.500 0 0 1 10.500 26" stroke="#ab47bc" strokeWidth="2" />
                <path d="M21.800 10 13.500 19h5l-2.200 5.500L25 16.500h-5z" stroke="#ab47bc" strokeWidth="1.700" />
                <circle cx="28.200" cy="7.500" r="3.200" fill={DOWN} />
                <path d="m6 14.500 1.700 5 4.800 1.700-4.800 1.700-1.700 5-1.700-5-4.800-1.700 4.800-1.700z" fill="#7e57ff" />
            </g>
            <Flag cx={19} />
            <Flag cx={48} />
        </svg>
    </Events>
);

const ranges = [
    ['1D', 19, 0], ['5D', 20, 16], ['1M', 22, 16], ['3M', 22, 15], ['6M', 23, 15],
    ['YTD', 31, 15], ['1Y', 19, 16], ['5Y', 20, 15], ['All', 20, 16],
];

export default function App() {
    return (
        <>
            <GlobalStyle />
            <Page>
                <TopToolbar />
                <Body>
                    <SideRail />
                    <Workspace>
                        <ChartRow>
                            <Pane>
                                <Candles />
                                <ChartLegend />
                                <OrderPanel>
                                    <OrderButton $w={93} $color={DOWN}>
                                        <Label $bold $size={15} $ls={0.4}>2,129.33</Label>
                                        <Label $size={13.5}>SELL</Label>
                                    </OrderButton>
                                    <Spread>1.21</Spread>
                                    <OrderButton $w={92} $color={BLUE}>
                                        <Label $bold $size={15} $ls={0.4}>2,130.54</Label>
                                        <Label $size={13.5}>BUY</Label>
                                    </OrderButton>
                                </OrderPanel>
                                <Drawings />
                                <Brand>
                                    <svg width="39" height="20" viewBox="0 4 35.5 18" fill={TEXT}>
                                        <path d="M14 22H7V11H0V4h14v18zM28 22h-8l7.5-18h8L28 22z" />
                                        <circle cx="20" cy="8" r="4" />
                                    </svg>
                                    TradingView
                                </Brand>
                                <EventMarks />
                                <Tag $x={1676} $y={138} $w={27} $h={27} $bg={HOVER} $side="left">
                                    <Icon viewBox="0 0 22 22" $w={20} $h={20}>
                                        <circle cx="11" cy="11" r="9.8" />
                                        <path d="M11 6.500v9M6.500 11h9" />
                                    </Icon>
                                </Tag>
                                <Tag $x={1638} $y={625} $w={65} $h={23} $bg={DOWN} $side="left">
                                    <Label $bold $size={14} $ls={-0.1}>ETHUSD</Label>
                                </Tag>
                            </Pane>
                            <PriceAxis>
                                {prices.map((price) => (
                                    <PriceLabel key={price}><Label $size={15.2} $ls={0.1}>{price}</Label></PriceLabel>
                                ))}
                                <Tag $x={1} $y={138} $w={77} $h={27} $bg={HOVER} $pad={10.5}>
                                    <Label $bold $size={14.5} $ls={0.4}>2,381.28</Label>
                                </Tag>
                                <Tag $x={1} $y={625} $w={77} $h={41} $bg={DOWN} $pad={10.5}>
                                    <Label $bold $size={14.5} $ls={0.4}>2,133.07</Label>
                                    <Label $size={14.5} $ls={0.4} $color="rgba(255, 255, 255, 0.75)">01:11:35</Label>
                                </Tag>
                            </PriceAxis>
                        </ChartRow>
                        <TimeAxis>
                            <TimeScale>
                                {daysBefore.map((day) => <Day key={day}>{day}</Day>)}
                                <DayBreak />
                                {daysAfter.map((day) => <Day key={day} $bold={day === 'Jun'}>{day}</Day>)}
                            </TimeScale>
                            <AxisSettings><HexIcon size={19} /></AxisSettings>
                            <HoverTime><Label $size={14.5} $ls={0.1}>{"Sat 02 May '26   08:00"}</Label></HoverTime>
                        </TimeAxis>
                        <BottomBar>
                            {ranges.map(([name, width, ml]) => (
                                <Label key={name} $w={width} $ml={ml} $ls={-0.4}>{name}</Label>
                            ))}
                            <Divider $ml={12} />
                            <Icon viewBox="0 0 26 26" $w={26} $h={26} $ml={17}>
                                <path d="M2 11V6a2.500 2.500 0 0 1 2.500-2.500h17A2.500 2.500 0 0 1 24 6v15a2.500 2.500 0 0 1-2.500 2.500H15M2 9h22M7.500.5v5M18.500.5v5M1 18.500h12M9.500 14.500l4 4-4 4" />
                            </Icon>
                        </BottomBar>
                        <Clock><Label $size={17} $ls={0.3}>18:48:25 UTC</Label></Clock>
                        <Watermark>
                            <svg width="28" height="28" viewBox="0 0 28 28" fill="currentColor">
                                <path d="m14 0 8.5 8.500-3.200 3.200L14 6.400l-5.300 5.300-3.200-3.200zM14 28l8.500-8.500-3.200-3.200L14 21.600l-5.300-5.300-3.200 3.200zM14 10.800l3.200 3.200-3.200 3.200-3.200-3.200zM3.200 10.800 6.400 14l-3.200 3.200L0 14zM24.800 10.800 28 14l-3.200 3.200-3.200-3.200z" />
                            </svg>
                            <Label $size={23.5} $ls={0.5}>@DigneFx</Label>
                        </Watermark>
                    </Workspace>
                </Body>
            </Page>
        </>
    );
}
